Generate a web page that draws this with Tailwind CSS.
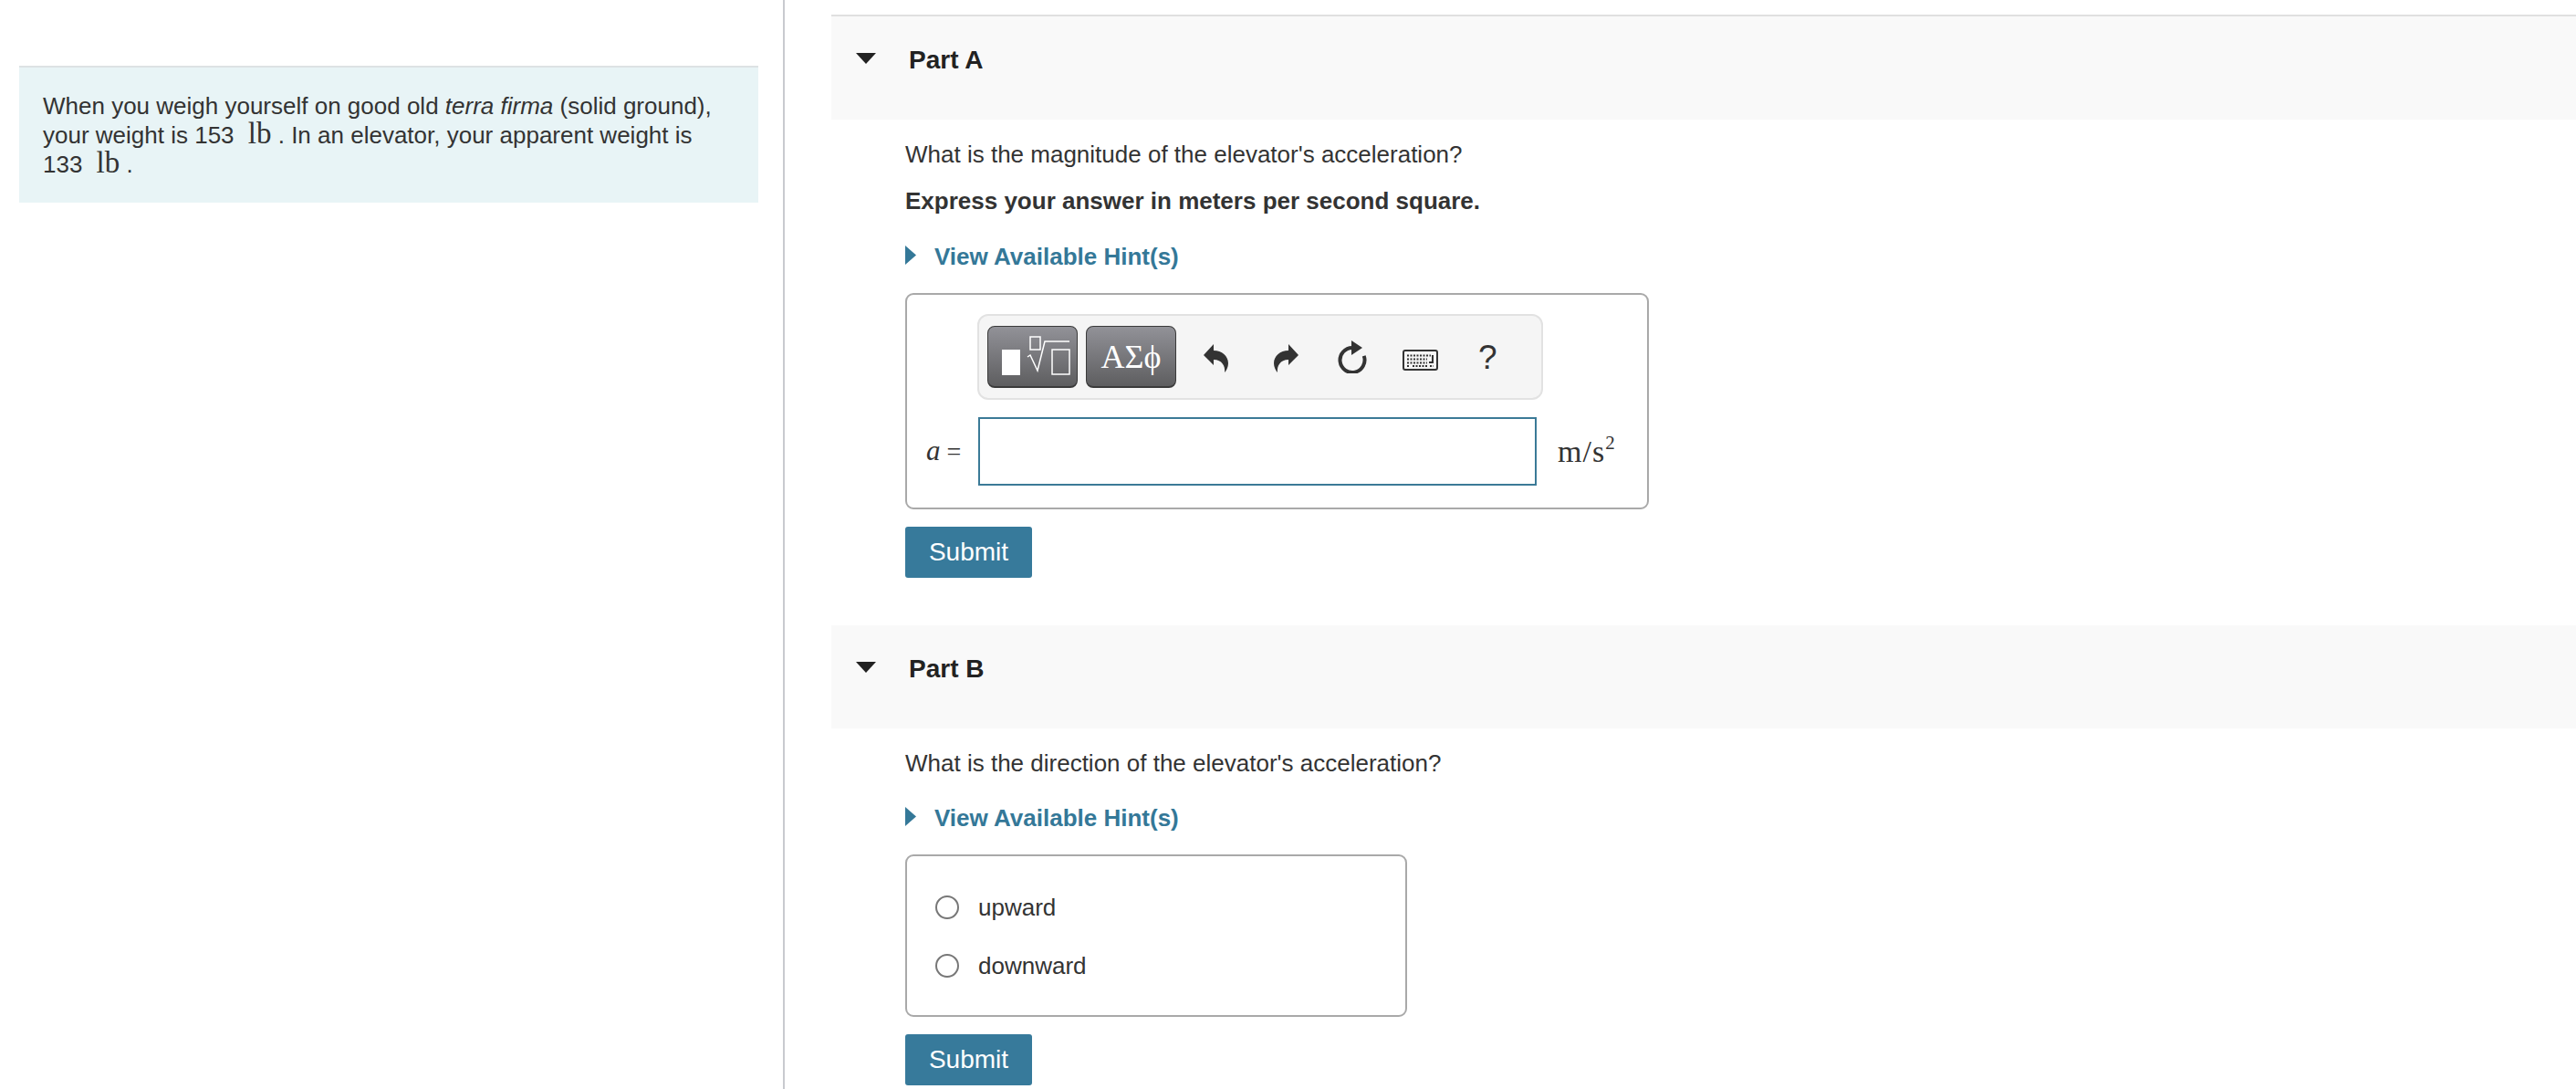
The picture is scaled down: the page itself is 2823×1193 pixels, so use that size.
<!DOCTYPE html>
<html lang="en">
<head>
<meta charset="utf-8">
<script src="https://cdn.jsdelivr.net/npm/@tailwindcss/browser@4"></script>
<title>Part A and B</title>
</head>
<body class="bg-white">
<div class="flex h-[1193px] w-[2823px] overflow-hidden font-['Liberation_Sans',Arial,sans-serif] text-[26px] text-[#333]">
  <aside class="w-[860px] shrink-0 border-r-2 border-[#c8cacf] pt-[72px] pl-[21px] pr-[27px]">
    <div class="h-[150px] border-t-2 border-[#dde2e4] bg-[#e8f4f6] px-[26px] pt-[26px] leading-[32px]">
      When you weigh yourself on good old <i>terra firma</i> (solid ground), your weight is 153 <span class="ml-[8px] font-['Liberation_Serif',serif] text-[33px] leading-[20px]">lb</span> . In an elevator, your apparent weight is 133 <span class="ml-[8px] font-['Liberation_Serif',serif] text-[33px] leading-[20px]">lb</span> .
    </div>
  </aside>
  <main class="flex-1 pl-[51px] pt-[16px]">
    <section>
      <div class="flex h-[115px] items-start border-t-2 border-[#e0e0e0] bg-[#f9f9f9] pl-[27px] pt-[31px]">
        <svg class="mt-[9px] h-[12px] w-[22px] fill-[#222]" viewBox="0 0 22 12"><path d="M0 0H22L11 12Z"/></svg>
        <h2 class="ml-[36px] text-[28px] leading-[34px] font-bold text-[#222]">Part A</h2>
      </div>
      <div class="pl-[81px]">
        <p class="mt-[21px] leading-[34px]">What is the magnitude of the elevator's acceleration?</p>
        <p class="mt-[17px] leading-[34px] font-bold">Express your answer in meters per second square.</p>
        <div class="mt-[27px] flex h-[34px] items-center font-bold text-[#347898]">
          <svg class="mb-[4px] h-[21px] w-[12px] fill-[#347898]" viewBox="0 0 12 21"><path d="M0 0L12 10.5L0 21Z"/></svg>
          <span class="ml-[20px]">View Available Hint(s)</span>
        </div>
        <div class="mt-[23px] h-[237px] w-[815px] rounded-[9px] border-2 border-[#a9a9a9] bg-white">
          <div class="ml-[77px] mt-[21px] flex h-[94px] w-[620px] items-center rounded-[12px] border-2 border-[#e2e2e2] bg-[#f5f5f5] pl-[9px]">
            <div class="h-[68px] w-[99px] overflow-hidden rounded-[8px] border border-b-2 border-[#3a3a3a] bg-linear-to-b from-[#929298] to-[#5e5e60]">
              <svg class="block h-[65px] w-[97px] fill-none stroke-white" viewBox="0 0 97 65"><rect x="15" y="25" width="20" height="28" fill="#fff" stroke="none"/><rect x="70" y="25" width="19" height="27" stroke-width="1.5"/><path d="M43 33L46 31L54 48L62 16H89" stroke-width="1.5"/><rect x="46" y="11" width="11" height="14" stroke-width="1.5"/></svg>
            </div>
            <div class="ml-[9px] flex h-[68px] w-[99px] items-center justify-center rounded-[8px] border border-b-2 border-[#3a3a3a] bg-linear-to-b from-[#929298] to-[#5e5e60] font-['Liberation_Serif',serif] text-[36px] text-white">ΑΣϕ</div>
            <svg class="ml-[30px] mt-[2px] h-[31px] w-[27px] fill-[#333]" viewBox="0 0 27 31"><path d="M0 12L11 0V7C20 7 27 13 27 21C27 25 25 29 23 31C24 24 20 17 11 17V23Z"/></svg>
            <svg class="ml-[50px] mt-[2px] h-[31px] w-[27px] fill-[#333]" viewBox="0 0 27 31"><path d="M27 12L16 0V7C7 7 0 13 0 21C0 25 2 29 4 31C3 24 7 17 16 17V23Z"/></svg>
            <svg class="ml-[43px] h-[36px] w-[32px]" viewBox="0 0 32 36"><path d="M28.7 16.9A13.5 13.5 0 1 1 16 8" fill="none" stroke="#333" stroke-width="4"/><path d="M15 0L27 8L15 16Z" fill="#333"/></svg>
            <svg class="ml-[39px] mt-[6px] h-[23px] w-[39px]" viewBox="0 0 39 23"><rect x="1" y="1" width="37" height="21" rx="2" fill="#f5f5f5" stroke="#333" stroke-width="2"/><path d="M5 6.5H31M5 10.5H27M5 14.5H27M5 18H8M11 18H27M30 18H34" stroke="#333" stroke-width="2" stroke-dasharray="2 1.5" fill="none"/><path d="M33 6V14H29" stroke="#333" stroke-width="2" fill="none"/></svg>
            <span class="ml-[44px] text-[37px] leading-none text-[#333]">?</span>
          </div>
          <div class="mt-[19px] flex items-center">
            <span class="ml-[21px] w-[57px] font-['Liberation_Serif',serif] text-[28px]"><i class="text-[31px]">a</i> =</span>
            <div class="h-[75px] w-[612px] border-2 border-[#3b7a97] bg-white"></div>
            <span class="ml-[23px] font-['Liberation_Serif',serif] text-[34px] tracking-[1px]">m/s<sup class="top-[-14px] text-[21px]">2</sup></span>
          </div>
        </div>
        <button class="mt-[19px] h-[56px] w-[139px] rounded-[3px] bg-[#377a9b] text-[28px] text-white">Submit</button>
      </div>
    </section>
    <section class="mt-[52px]">
      <div class="flex h-[113px] items-start bg-[#f9f9f9] pl-[27px] pt-[31px]">
        <svg class="mt-[9px] h-[12px] w-[22px] fill-[#222]" viewBox="0 0 22 12"><path d="M0 0H22L11 12Z"/></svg>
        <h2 class="ml-[36px] text-[28px] leading-[34px] font-bold text-[#222]">Part B</h2>
      </div>
      <div class="pl-[81px]">
        <p class="mt-[21px] leading-[34px]">What is the direction of the elevator's acceleration?</p>
        <div class="mt-[26px] flex h-[34px] items-center font-bold text-[#347898]">
          <svg class="mb-[4px] h-[21px] w-[12px] fill-[#347898]" viewBox="0 0 12 21"><path d="M0 0L12 10.5L0 21Z"/></svg>
          <span class="ml-[20px]">View Available Hint(s)</span>
        </div>
        <div class="mt-[23px] h-[178px] w-[550px] rounded-[9px] border-2 border-[#a9a9a9] bg-white pl-[31px] pt-[24px]">
          <label class="flex h-[64px] items-center"><span class="h-[26px] w-[26px] rounded-full border-2 border-[#777] bg-white"></span><span class="ml-[21px]">upward</span></label>
          <label class="flex h-[64px] items-center"><span class="h-[26px] w-[26px] rounded-full border-2 border-[#777] bg-white"></span><span class="ml-[21px]">downward</span></label>
        </div>
        <button class="mt-[19px] h-[56px] w-[139px] rounded-[3px] bg-[#377a9b] text-[28px] text-white">Submit</button>
      </div>
    </section>
  </main>
</div>
</body>
</html>
